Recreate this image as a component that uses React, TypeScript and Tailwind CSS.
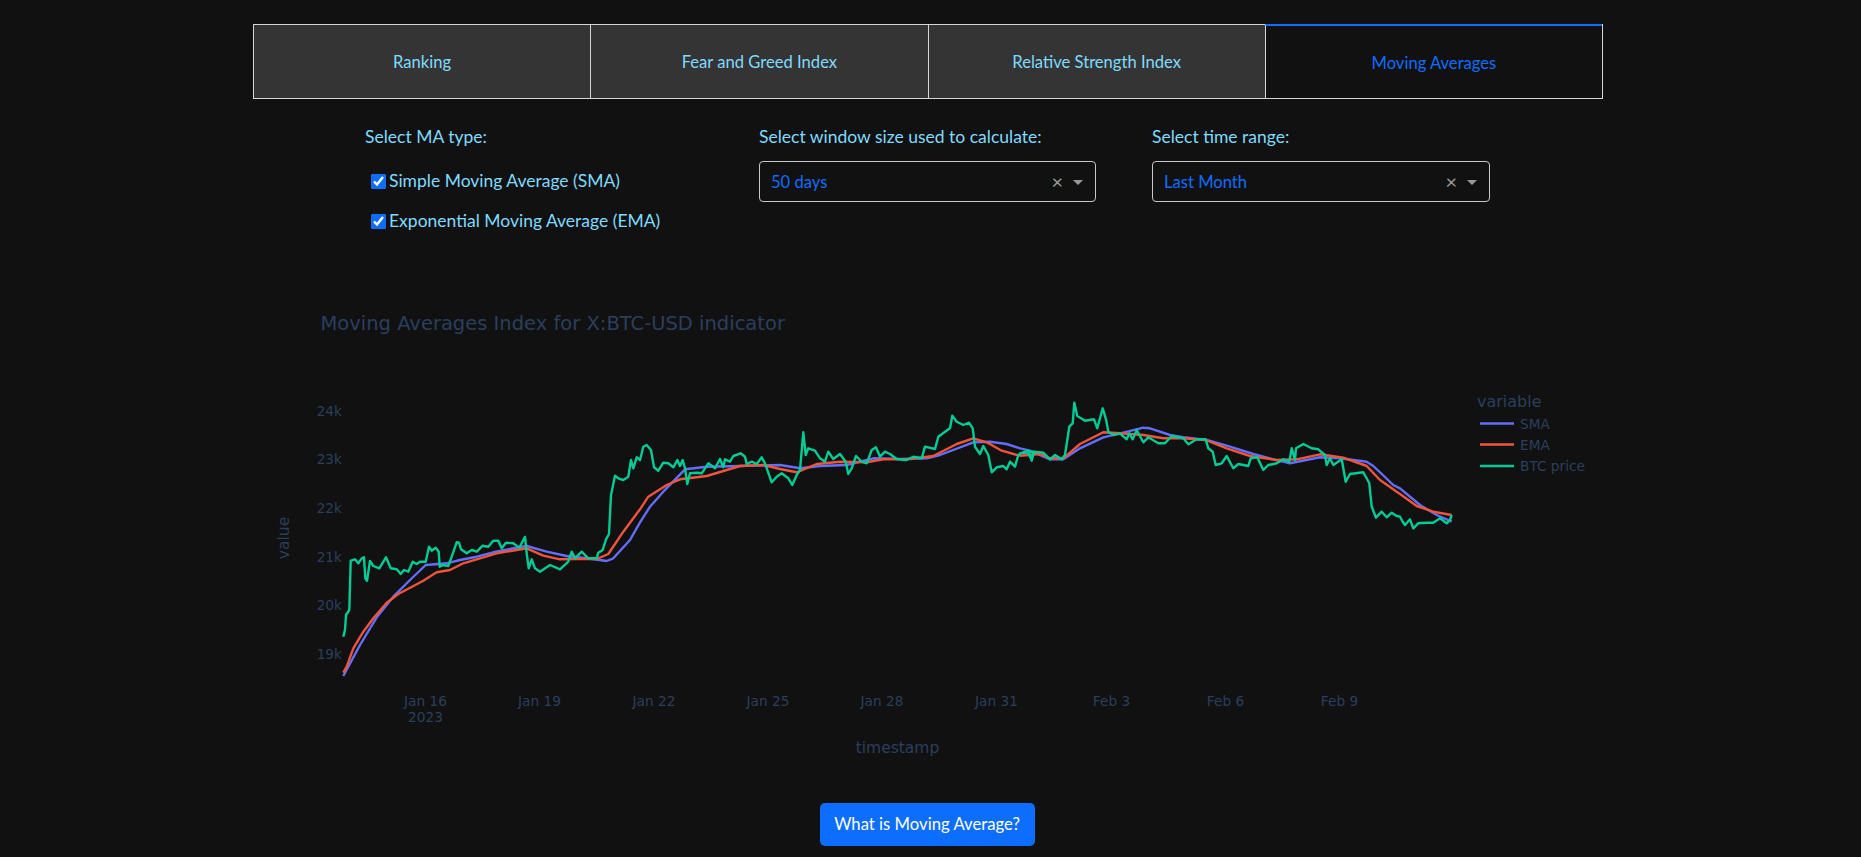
const uiFont = { fontFamily: "Lato, 'Liberation Sans', sans-serif" };

type Pt = [number, number];
type Crop = { x: number; pts: number[] };

// traced from 3x crops of the chart, all starting at y=380
const toPath = (crops: Crop[]) => {
  const out: Pt[] = [];
  crops.forEach((c) => {
    for (let i = 0; i < c.pts.length; i += 2) {
      out.push([c.x + c.pts[i] / 3, 380 + c.pts[i + 1] / 3]);
    }
  });
  return out.map((p) => `${p[0].toFixed(1)},${p[1].toFixed(1)}`).join(" ");
};

const btcPrice = toPath([
  {
    x: 260,
    pts: [
      250, 770, 255, 750, 258, 705, 268, 690, 272, 542, 285, 538, 295, 550, 305, 535, 312, 532, 316, 595, 321, 602, 330,
      543, 340, 558, 358, 565, 378, 532, 392, 565, 410, 568, 422, 582, 432, 570, 445, 575, 458, 545, 470, 552, 480, 545,
      497, 545, 507, 500, 515, 512, 527, 503, 536, 515, 539, 560, 550, 555, 565, 558, 575, 530, 590, 487, 597, 488, 603,
      508, 620, 520, 635, 510, 650, 515, 660, 505, 668, 497, 685, 500, 700, 482, 715, 482, 725, 505, 738, 488, 760, 490,
      778, 503, 795, 470, 800, 520, 806, 565, 815, 538, 825, 565, 840, 575, 870, 555, 900, 568, 925, 545, 935, 515, 945,
      535, 965, 515, 985, 535, 1010, 535, 1015, 518, 1028, 510, 1038, 478, 1047, 462, 1053, 345, 1065, 287, 1075, 295,
      1090, 300, 1105, 290, 1113, 240, 1120, 265, 1130, 232,
    ],
  },
  {
    x: 640,
    pts: [
      0, 240, 10, 200, 20, 195, 33, 210, 42, 262, 55, 272, 70, 248, 85, 250, 100, 262, 112, 240, 120, 258, 128, 240, 135,
      265, 142, 312, 150, 280, 170, 278, 185, 280, 205, 250, 225, 265, 240, 237, 250, 262, 255, 238, 270, 245, 280, 228,
      302, 220, 315, 230, 320, 252, 335, 245, 350, 252, 365, 232, 375, 250, 395, 307, 410, 290, 425, 280, 445, 295, 457,
      315, 470, 285, 480, 270, 490, 157, 497, 225, 505, 205, 525, 212, 540, 235, 555, 245, 565, 215, 580, 237, 600, 222,
      617, 245, 625, 282, 635, 265, 648, 228, 665, 245, 680, 250, 695, 210, 708, 202, 720, 230, 735, 215, 750, 222, 770,
      237, 800, 240, 820, 230, 845, 235, 855, 200, 885, 207, 895, 170, 915, 155, 930, 145, 937, 107, 950, 125, 970, 135,
      987, 128, 998, 145, 1005, 200, 1020, 222, 1030, 198, 1045, 225, 1055, 277, 1070, 262, 1090, 258, 1100, 268, 1110,
      245, 1125, 260, 1135, 225, 1160, 212, 1175, 240, 1180, 215,
    ],
  },
  {
    x: 1020,
    pts: [
      0, 220, 25, 212, 35, 242, 42, 215, 70, 218, 90, 238, 105, 225, 125, 238, 135, 225, 148, 140, 158, 130, 163, 68, 172,
      108, 195, 122, 222, 118, 232, 145, 248, 85, 258, 118, 265, 155, 280, 165, 300, 160, 320, 178, 328, 160, 338, 178,
      350, 150, 370, 187, 385, 172, 415, 190, 435, 190, 455, 168, 490, 175, 505, 193, 530, 178, 557, 178, 565, 205, 578,
      215, 587, 255, 605, 250, 620, 228, 640, 265, 655, 252, 685, 258, 692, 235, 712, 232, 730, 270, 745, 255, 770, 250,
      790, 238, 808, 245, 815, 205, 825, 240, 828, 205, 850, 192, 875, 205, 895, 208, 915, 225, 920, 255, 930, 235, 940,
      255, 965, 238, 977, 305, 990, 282, 1030, 277, 1048, 310, 1055, 380, 1068, 413, 1085, 395, 1100, 412, 1115, 398, 1130,
      408,
    ],
  },
  { x: 1400, pts: [0, 410, 8, 425, 15, 435, 30, 418, 40, 445, 55, 430, 80, 428, 100, 428, 120, 415, 140, 430, 150, 420, 155, 405] },
]);

const sma = toPath([
  {
    x: 260,
    pts: [
      250, 888, 300, 795, 350, 712, 400, 650, 450, 600, 497, 555, 560, 550, 600, 540, 650, 530, 700, 517, 760, 505, 800, 498,
      860, 515, 920, 528, 980, 535, 1040, 543, 1060, 535, 1110, 480,
    ],
  },
  {
    x: 640,
    pts: [
      0, 427, 30, 380, 70, 335, 135, 268, 200, 260, 300, 258, 420, 255, 480, 265, 540, 258, 620, 255, 700, 235, 780, 237, 860,
      235, 900, 225, 1000, 187, 1050, 185, 1100, 192,
    ],
  },
  {
    x: 1020,
    pts: [
      0, 205, 30, 212, 90, 238, 130, 238, 180, 205, 250, 172, 310, 158, 370, 143, 390, 145, 450, 165, 490, 172, 560, 180, 620,
      197, 700, 222, 760, 238, 810, 250, 900, 232, 960, 235, 1040, 245, 1060, 258, 1120, 315,
    ],
  },
  { x: 1400, pts: [0, 325, 60, 375, 110, 405, 155, 425] },
]);

const ema = toPath([
  {
    x: 260,
    pts: [
      250, 878, 260, 860, 280, 805, 310, 755, 340, 715, 380, 668, 415, 642, 490, 602, 530, 577, 570, 570, 610, 550, 710, 520,
      800, 505, 850, 527, 900, 538, 950, 537, 1010, 537, 1045, 522, 1090, 455,
    ],
  },
  {
    x: 640,
    pts: [
      0, 388, 25, 350, 80, 315, 120, 298, 200, 288, 300, 258, 370, 255, 420, 267, 470, 277, 530, 252, 600, 245, 680, 247, 730,
      238, 810, 237, 880, 228, 950, 192, 1000, 175, 1040, 187, 1085, 212,
    ],
  },
  {
    x: 1020,
    pts: [
      0, 227, 60, 222, 90, 235, 130, 235, 180, 192, 250, 157, 300, 160, 370, 165, 430, 175, 490, 175, 557, 180, 620, 205, 690,
      228, 770, 240, 830, 238, 900, 223, 970, 233, 1040, 258, 1080, 300, 1130, 335,
    ],
  },
  { x: 1400, pts: [0, 342, 50, 378, 100, 395, 155, 405] },
]);

const yTicks = [
  { label: "24k", y: 411 },
  { label: "23k", y: 459 },
  { label: "22k", y: 508 },
  { label: "21k", y: 557 },
  { label: "20k", y: 605 },
  { label: "19k", y: 654 },
];

const xTicks = [
  { label: "Jan 16", x: 425.5 },
  { label: "Jan 19", x: 539.5 },
  { label: "Jan 22", x: 654 },
  { label: "Jan 25", x: 768 },
  { label: "Jan 28", x: 882 },
  { label: "Jan 31", x: 996.5 },
  { label: "Feb 3", x: 1111.5 },
  { label: "Feb 6", x: 1225.5 },
  { label: "Feb 9", x: 1339.5 },
];

const legend = [
  { label: "SMA", color: "#636efa", y: 423.5 },
  { label: "EMA", color: "#ef553b", y: 444.5 },
  { label: "BTC price", color: "#00cc96", y: 466 },
];

const tabs = ["Ranking", "Fear and Greed Index", "Relative Strength Index", "Moving Averages"];

const Tabs = () => (
  <div className="flex h-[75px] border border-[#d6d6d6]">
    {tabs.map((tab, i) => {
      const active = i === 3;
      return (
        <div
          key={tab}
          className={
            active
              ? "flex flex-1 items-center justify-center border-t-2 border-t-[#0d6efd] border-l border-l-[#d6d6d6] -mt-px bg-[#111111] pt-[2px] text-[16.6px] text-[#0d6efd]"
              : "flex flex-1 items-center justify-center border-l border-l-[#d6d6d6] first:border-l-0 bg-[#343434] pt-[2px] text-[16.6px] text-[#7fdbff]"
          }
        >
          {tab}
        </div>
      );
    })}
  </div>
);

const Dropdown = ({ label, value, width }: { label: string; value: string; width: string }) => (
  <div>
    <div className="text-[17.5px] leading-6 text-[#7fdbff]">{label}</div>
    <div className={`mt-[12px] flex h-[41px] ${width} items-center rounded border border-[#c8c8c8] bg-[#111111] pl-[11px] pr-[12px]`}>
      <span className="flex-1 pt-px text-[16.6px] text-[#0d6efd]">{value}</span>
      <span className="mr-[10px] -mt-[2px] text-[20px] leading-none text-[#999999]">×</span>
      <span className="mt-[2px] h-0 w-0 border-x-[5px] border-t-[5px] border-x-transparent border-t-[#999999]" />
    </div>
  </div>
);

const MaCheck = ({ label }: { label: string }) => (
  <label className="flex h-[24px] items-center gap-[3px] pl-[6px] text-[17.5px] text-[#7fdbff]">
    <input type="checkbox" defaultChecked readOnly className="h-[15px] w-[15px] accent-[#0d6efd]" />
    {label}
  </label>
);

const Chart = () => (
  <svg
    viewBox="253 280 1350 500"
    className="block h-[500px] w-[1350px]"
    style={{ fontFamily: "'DejaVu Sans', Verdana, sans-serif" }}
    fill="#2a3f5f"
  >
    <text x="320.5" y="330" fontSize="19.5">
      Moving Averages Index for X:BTC-USD indicator
    </text>

    {yTicks.map((t) => (
      <text key={t.label} x="342" y={t.y + 5} fontSize="13.7" textAnchor="end">
        {t.label}
      </text>
    ))}
    {xTicks.map((t) => (
      <text key={t.label} x={t.x} y="706" fontSize="13.7" textAnchor="middle">
        {t.label}
      </text>
    ))}
    <text x="425.5" y="722" fontSize="13.7" textAnchor="middle">
      2023
    </text>
    <text x="897.5" y="753" fontSize="15.5" textAnchor="middle">
      timestamp
    </text>
    <text transform="translate(289 538) rotate(-90)" fontSize="15.5" textAnchor="middle">
      value
    </text>

    <polyline points={sma} fill="none" stroke="#636efa" strokeWidth="2.4" strokeLinejoin="round" />
    <polyline points={ema} fill="none" stroke="#ef553b" strokeWidth="2.4" strokeLinejoin="round" />
    <polyline points={btcPrice} fill="none" stroke="#00cc96" strokeWidth="2.4" strokeLinejoin="round" />

    <text x="1477" y="407" fontSize="16">
      variable
    </text>
    {legend.map((l) => (
      <g key={l.label}>
        <line x1="1480" x2="1514" y1={l.y} y2={l.y} stroke={l.color} strokeWidth="2.4" />
        <text x="1520" y={l.y + 5} fontSize="13.7">
          {l.label}
        </text>
      </g>
    ))}
  </svg>
);

export default function App() {
  return (
    <div className="h-[857px] overflow-hidden bg-[#111111] pt-[24px]" style={uiFont}>
      <div className="ml-[253px] w-[1350px]">
        <Tabs />
        <div className="mt-[26px] flex pl-[112px]">
          <div className="w-[394px]">
            <div className="text-[17.5px] leading-6 text-[#7fdbff]">Select MA type:</div>
            <div className="mt-[20px] flex flex-col gap-[16px]">
              <MaCheck label="Simple Moving Average (SMA)" />
              <MaCheck label="Exponential Moving Average (EMA)" />
            </div>
          </div>
          <div className="w-[393px]">
            <Dropdown label="Select window size used to calculate:" value="50 days" width="w-[337px]" />
          </div>
          <Dropdown label="Select time range:" value="Last Month" width="w-[338px]" />
        </div>
        <div className="mt-[47px]">
          <Chart />
        </div>
        <div className="mt-[23px] flex justify-center">
          <button className="-ml-[2px] h-[43px] w-[215px] rounded-[5px] bg-[#0d6efd] text-[16.7px] text-white">
            What is Moving Average?
          </button>
        </div>
      </div>
    </div>
  );
}
